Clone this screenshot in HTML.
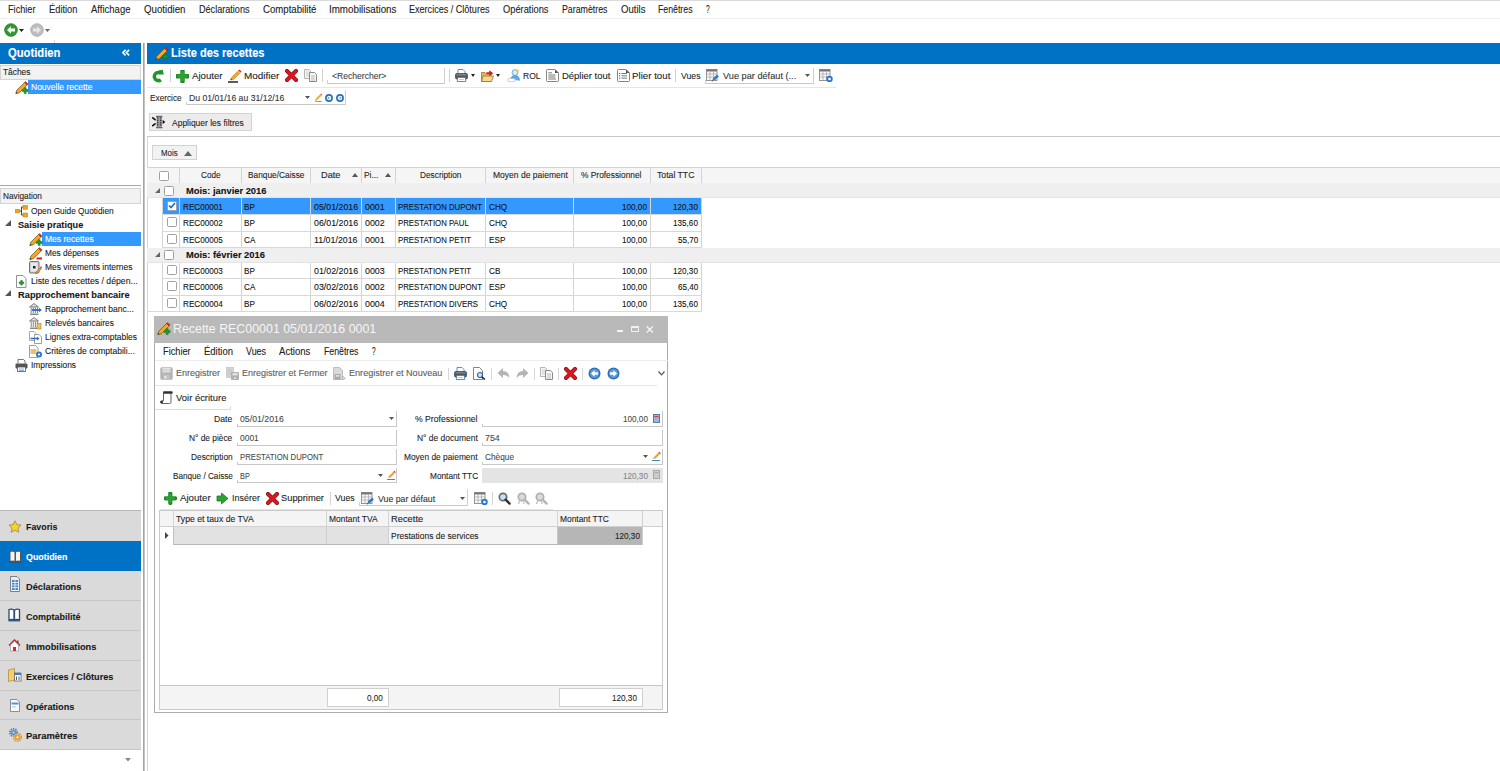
<!DOCTYPE html>
<html><head><meta charset="utf-8"><style>
html,body{margin:0;padding:0;width:1500px;height:771px;overflow:hidden;background:#fff;font-family:"Liberation Sans", sans-serif;}
.a{position:absolute;}
.t{position:absolute;white-space:nowrap;font-family:"Liberation Sans", sans-serif;-webkit-text-stroke:0.1px currentColor;}
</style></head><body>
<div class="a" style="left:0px;top:0px;width:1500px;height:1px;background:#dadada;"></div><div class="a" style="left:0px;top:18px;width:1500px;height:1px;background:#f0f0f0;"></div><div class="t" style="top:-0.64px;height:20px;line-height:20px;font-size:10.5px;color:#222;left:8.00px;transform:scaleX(0.872);transform-origin:0 0;">Fichier</div><div class="t" style="top:-0.64px;height:20px;line-height:20px;font-size:10.5px;color:#222;left:49.00px;transform:scaleX(0.886);transform-origin:0 0;">Édition</div><div class="t" style="top:-0.64px;height:20px;line-height:20px;font-size:10.5px;color:#222;left:91.00px;transform:scaleX(0.905);transform-origin:0 0;">Affichage</div><div class="t" style="top:-0.64px;height:20px;line-height:20px;font-size:10.5px;color:#222;left:144.00px;transform:scaleX(0.922);transform-origin:0 0;">Quotidien</div><div class="t" style="top:-0.64px;height:20px;line-height:20px;font-size:10.5px;color:#222;left:199.00px;transform:scaleX(0.865);transform-origin:0 0;">Déclarations</div><div class="t" style="top:-0.64px;height:20px;line-height:20px;font-size:10.5px;color:#222;left:263.00px;transform:scaleX(0.916);transform-origin:0 0;">Comptabilité</div><div class="t" style="top:-0.64px;height:20px;line-height:20px;font-size:10.5px;color:#222;left:329.00px;transform:scaleX(0.932);transform-origin:0 0;">Immobilisations</div><div class="t" style="top:-0.64px;height:20px;line-height:20px;font-size:10.5px;color:#222;left:409.00px;transform:scaleX(0.862);transform-origin:0 0;">Exercices / Clôtures</div><div class="t" style="top:-0.64px;height:20px;line-height:20px;font-size:10.5px;color:#222;left:503.00px;transform:scaleX(0.886);transform-origin:0 0;">Opérations</div><div class="t" style="top:-0.64px;height:20px;line-height:20px;font-size:10.5px;color:#222;left:562.00px;transform:scaleX(0.838);transform-origin:0 0;">Paramètres</div><div class="t" style="top:-0.64px;height:20px;line-height:20px;font-size:10.5px;color:#222;left:621.00px;transform:scaleX(0.911);transform-origin:0 0;">Outils</div><div class="t" style="top:-0.64px;height:20px;line-height:20px;font-size:10.5px;color:#222;left:658.00px;transform:scaleX(0.833);transform-origin:0 0;">Fenêtres</div><div class="t" style="top:-0.64px;height:20px;line-height:20px;font-size:10.5px;color:#222;left:706.00px;transform:scaleX(0.622);transform-origin:0 0;">?</div><svg class="a" style="left:4px;top:23px" width="14" height="14" viewBox="0 0 14 14"><circle cx="7" cy="7" r="6.3" fill="#2f9a2f" stroke="#1d7a1d" stroke-width="0.8"/><path d="M3 7 L7 3.2 V5.6 H11 V8.4 H7 V10.8 Z" fill="#fff"/></svg><svg class="a" style="left:19px;top:29px" width="5" height="3" viewBox="0 0 5 3"><path d="M0 0 H5 L2.5 3Z" fill="#222"/></svg><svg class="a" style="left:30px;top:23px" width="14" height="14" viewBox="0 0 14 14"><circle cx="7" cy="7" r="6.3" fill="#bdbdbd" stroke="#aaa" stroke-width="0.8"/><path d="M11 7 L7 3.2 V5.6 H3 V8.4 H7 V10.8 Z" fill="#e6e6e6"/></svg><svg class="a" style="left:45px;top:29px" width="5" height="3" viewBox="0 0 5 3"><path d="M0 0 H5 L2.5 3Z" fill="#666"/></svg><div class="a" style="left:54px;top:40px;width:1px;height:3px;background:#dcdcdc;"></div><div class="a" style="left:0px;top:43px;width:141px;height:21px;background:#0072c6;"></div><div class="t" style="top:42.67px;height:20px;line-height:20px;font-size:12.5px;color:#fff;font-weight:bold;left:8.00px;transform:scaleX(0.900);transform-origin:0 0;">Quotidien</div><svg class="a" style="left:122px;top:49px" width="8" height="8" viewBox="0 0 8 8"><path d="M3.6 0.8 L0.9 3.6 L3.6 6.4 M7.1 0.8 L4.4 3.6 L7.1 6.4" stroke="#f4f8fc" stroke-width="1.7" fill="none"/></svg><div class="a" style="left:0px;top:65px;width:141px;height:15px;background:#f2f2f2;box-sizing:border-box;border:1px solid #d4d4d4;"></div><div class="t" style="top:61.67px;height:20px;line-height:20px;font-size:9.6px;color:#222;left:3.00px;transform:scaleX(0.873);transform-origin:0 0;">Tâches</div><div class="a" style="left:28px;top:80px;width:113px;height:14px;background:#3399ff;"></div><div class="t" style="top:76.67px;height:20px;line-height:20px;font-size:9.6px;color:#fff;left:31.00px;transform:scaleX(0.886);transform-origin:0 0;">Nouvelle recette</div><div class="a" style="left:0px;top:185px;width:141px;height:1px;background:#a6a6a6;"></div><div class="a" style="left:0px;top:188px;width:141px;height:16px;background:#f2f2f2;box-sizing:border-box;border:1px solid #d4d4d4;"></div><div class="t" style="top:185.67px;height:20px;line-height:20px;font-size:9.6px;color:#222;left:3.00px;transform:scaleX(0.859);transform-origin:0 0;">Navigation</div><div class="a" style="left:42px;top:232px;width:99px;height:14px;background:#3399ff;"></div><div class="t" style="top:200.67px;height:20px;line-height:20px;font-size:9.6px;color:#1a1a1a;left:30.60px;transform:scaleX(0.866);transform-origin:0 0;">Open Guide Quotidien</div><svg class="a" style="left:15px;top:205px" width="13" height="13" viewBox="0 0 13 13"><path d="M4 6 H6.5 V2 H8 M6.5 6 V10 H8" stroke="#444" stroke-width="1" fill="none"/><rect x="0.3" y="4.3" width="4" height="3.6" fill="#f5a31a" stroke="#c07a10" stroke-width="0.5"/><rect x="8" y="0.3" width="4.6" height="4" fill="#f5a31a" stroke="#c07a10" stroke-width="0.5"/><rect x="8" y="8" width="4.6" height="4" fill="#f5a31a" stroke="#c07a10" stroke-width="0.5"/></svg><div class="t" style="top:214.67px;height:20px;line-height:20px;font-size:9.6px;color:#1a1a1a;font-weight:bold;left:17.60px;transform:scaleX(0.956);transform-origin:0 0;">Saisie pratique</div><svg class="a" style="left:5px;top:220px" width="6" height="6" viewBox="0 0 6 6"><path d="M6 0 V6 H0Z" fill="#555"/></svg><div class="t" style="top:228.67px;height:20px;line-height:20px;font-size:9.6px;color:#fff;left:44.60px;transform:scaleX(0.887);transform-origin:0 0;">Mes recettes</div><svg class="a" style="left:29px;top:233px" width="14" height="14" viewBox="0 0 14 14"><path d="M0.8 12.6 L1.8 9.2 L9.6 1.4 L12.2 4 L4.4 11.8Z" fill="#f5a623" stroke="#6a4a20" stroke-width="0.7"/><path d="M9.6 1.4 L10.6 0.4 L13.2 3 L12.2 4Z" fill="#e8252f" stroke="#a01010" stroke-width="0.4"/><path d="M0.8 12.6 L1.3 10.9 L2.6 12.1Z" fill="#333"/><path d="M7.3 8.6 H9.2 V6.7 H11.2 V8.6 H13.1 V10.6 H11.2 V12.6 H9.2 V10.6 H7.3Z" fill="#1f9a2a" stroke="#126a1a" stroke-width="0.5"/></svg><div class="t" style="top:242.67px;height:20px;line-height:20px;font-size:9.6px;color:#1a1a1a;left:44.60px;transform:scaleX(0.863);transform-origin:0 0;">Mes dépenses</div><svg class="a" style="left:29px;top:247px" width="14" height="14" viewBox="0 0 14 14"><path d="M0.8 12.6 L1.8 9.2 L9.6 1.4 L12.2 4 L4.4 11.8Z" fill="#f5a623" stroke="#6a4a20" stroke-width="0.7"/><path d="M9.6 1.4 L10.6 0.4 L13.2 3 L12.2 4Z" fill="#e8252f" stroke="#a01010" stroke-width="0.4"/><path d="M0.8 12.6 L1.3 10.9 L2.6 12.1Z" fill="#333"/><rect x="7.5" y="10.5" width="5.5" height="2" fill="#e0182a"/></svg><div class="t" style="top:256.67px;height:20px;line-height:20px;font-size:9.6px;color:#1a1a1a;left:44.60px;transform:scaleX(0.881);transform-origin:0 0;">Mes virements internes</div><svg class="a" style="left:29px;top:261px" width="14" height="14" viewBox="0 0 14 14"><rect x="0.5" y="0.5" width="9.5" height="11.5" rx="1" fill="#d0d0d0" stroke="#555" stroke-width="0.8"/><rect x="2" y="2" width="6.5" height="8.5" fill="#e8e8e8"/><rect x="4" y="5" width="2.5" height="2.5" fill="#222"/><path d="M6.5 12.5 L7 11 L11 7 L12.2 8.2 L8.2 12.2Z" fill="#f5a623" stroke="#6a4a20" stroke-width="0.5"/><circle cx="12" cy="6.5" r="0.9" fill="#e03030"/></svg><div class="t" style="top:270.67px;height:20px;line-height:20px;font-size:9.6px;color:#1a1a1a;left:30.60px;transform:scaleX(0.906);transform-origin:0 0;">Liste des recettes / dépen...</div><svg class="a" style="left:16px;top:275px" width="11" height="13" viewBox="0 0 11 13"><path d="M0.5 0.5 H7 L10 3.5 V12.5 H0.5Z" fill="#fff" stroke="#777" stroke-width="0.8"/><path d="M3.2 7 H4.7 V5.5 H6.3 V7 H7.8 V8.6 H6.3 V10.1 H4.7 V8.6 H3.2Z" fill="#1f9a2a" stroke="#126a1a" stroke-width="0.5"/></svg><div class="t" style="top:284.67px;height:20px;line-height:20px;font-size:9.6px;color:#1a1a1a;font-weight:bold;left:17.60px;transform:scaleX(0.969);transform-origin:0 0;">Rapprochement bancaire</div><svg class="a" style="left:5px;top:290px" width="6" height="6" viewBox="0 0 6 6"><path d="M6 0 V6 H0Z" fill="#555"/></svg><div class="t" style="top:298.67px;height:20px;line-height:20px;font-size:9.6px;color:#1a1a1a;left:44.60px;transform:scaleX(0.891);transform-origin:0 0;">Rapprochement banc...</div><svg class="a" style="left:29px;top:303px" width="13" height="13" viewBox="0 0 13 13"><path d="M0.5 4 L5 0.5 L9.5 4Z" fill="#ddd" stroke="#666" stroke-width="0.8"/><rect x="1" y="10.5" width="8.5" height="1.5" fill="#888"/><path d="M2.2 4.5 V10 M4.3 4.5 V10 M6.4 4.5 V10 M8.5 4.5 V10" stroke="#777" stroke-width="0.9"/><path d="M3 7 H11.5" stroke="#2a70c0" stroke-width="1.8"/><path d="M10 4.8 L12.8 7 L10 9.2Z" fill="#2a70c0"/></svg><div class="t" style="top:312.67px;height:20px;line-height:20px;font-size:9.6px;color:#1a1a1a;left:44.60px;transform:scaleX(0.872);transform-origin:0 0;">Relevés bancaires</div><svg class="a" style="left:29px;top:317px" width="13" height="13" viewBox="0 0 13 13"><path d="M0.5 4 L5 0.5 L9.5 4Z" fill="#ddd" stroke="#666" stroke-width="0.8"/><rect x="1" y="10.5" width="8.5" height="1.5" fill="#888"/><path d="M2.2 4.5 V10 M4.3 4.5 V10 M6.4 4.5 V10 M8.5 4.5 V10" stroke="#777" stroke-width="0.9"/><rect x="8" y="6.5" width="4" height="5.5" fill="#f2c060" stroke="#b07a20" stroke-width="0.6"/></svg><div class="t" style="top:326.67px;height:20px;line-height:20px;font-size:9.6px;color:#1a1a1a;left:44.60px;transform:scaleX(0.880);transform-origin:0 0;">Lignes extra-comptables</div><svg class="a" style="left:29px;top:331px" width="13" height="13" viewBox="0 0 13 13"><path d="M0.5 0.5 H5 L7 2.5 V9.5 H0.5Z" fill="#fff" stroke="#888" stroke-width="0.7"/><path d="M5.5 3.5 H10 L12.5 6 V12.5 H5.5Z" fill="#fff" stroke="#777" stroke-width="0.7"/><path d="M1.5 7.5 H9" stroke="#2a70c0" stroke-width="1.6"/><path d="M8 5.5 L10.5 7.5 L8 9.5Z" fill="#2a70c0"/></svg><div class="t" style="top:340.67px;height:20px;line-height:20px;font-size:9.6px;color:#1a1a1a;left:44.60px;transform:scaleX(0.891);transform-origin:0 0;">Critères de comptabili...</div><svg class="a" style="left:29px;top:345px" width="14" height="13" viewBox="0 0 14 13"><path d="M0.5 0.5 H6.5 L9 3 V12.5 H0.5Z" fill="#fff" stroke="#777" stroke-width="0.7"/><rect x="1.5" y="4" width="6" height="5" fill="#f2c060"/><circle cx="10" cy="9.5" r="3" fill="#2a78d0"/><circle cx="10" cy="9.5" r="1.1" fill="#fff"/></svg><div class="t" style="top:354.67px;height:20px;line-height:20px;font-size:9.6px;color:#1a1a1a;left:30.60px;transform:scaleX(0.871);transform-origin:0 0;">Impressions</div><svg class="a" style="left:15px;top:359px" width="13" height="13" viewBox="0 0 13 13"><path d="M3 4.5 V0.5 H8.5 L10 2 V4.5" fill="#fff" stroke="#555" stroke-width="0.8"/><rect x="0.5" y="4.5" width="12" height="5" rx="1" fill="#555"/><rect x="2.5" y="8" width="8" height="4.5" fill="#fff" stroke="#555" stroke-width="0.8"/><path d="M4 10H9M4 11.5H9" stroke="#6aa0d8" stroke-width="0.8"/></svg><div class="a" style="left:0px;top:510px;width:141px;height:1px;background:#b8b8b8;"></div><div class="a" style="left:0px;top:511px;width:141px;height:30px;background:#dadada;"></div><div class="t" style="top:516.60px;height:20px;line-height:20px;font-size:9.8px;color:#1a1a1a;font-weight:bold;left:26.00px;transform:scaleX(0.903);transform-origin:0 0;">Favoris</div><div class="a" style="left:0px;top:541px;width:141px;height:30px;background:#0072c6;"></div><div class="t" style="top:546.60px;height:20px;line-height:20px;font-size:9.8px;color:#fff;font-weight:bold;left:26.00px;transform:scaleX(0.907);transform-origin:0 0;">Quotidien</div><div class="a" style="left:0px;top:571px;width:141px;height:30px;background:#dadada;"></div><div class="a" style="left:0px;top:600px;width:141px;height:1px;background:#c6c6c6;"></div><div class="t" style="top:576.60px;height:20px;line-height:20px;font-size:9.8px;color:#1a1a1a;font-weight:bold;left:26.00px;transform:scaleX(0.942);transform-origin:0 0;">Déclarations</div><div class="a" style="left:0px;top:601px;width:141px;height:30px;background:#dadada;"></div><div class="a" style="left:0px;top:630px;width:141px;height:1px;background:#c6c6c6;"></div><div class="t" style="top:606.60px;height:20px;line-height:20px;font-size:9.8px;color:#1a1a1a;font-weight:bold;left:26.00px;transform:scaleX(0.918);transform-origin:0 0;">Comptabilité</div><div class="a" style="left:0px;top:631px;width:141px;height:30px;background:#dadada;"></div><div class="a" style="left:0px;top:660px;width:141px;height:1px;background:#c6c6c6;"></div><div class="t" style="top:636.60px;height:20px;line-height:20px;font-size:9.8px;color:#1a1a1a;font-weight:bold;left:26.00px;transform:scaleX(0.944);transform-origin:0 0;">Immobilisations</div><div class="a" style="left:0px;top:661px;width:141px;height:30px;background:#dadada;"></div><div class="a" style="left:0px;top:690px;width:141px;height:1px;background:#c6c6c6;"></div><div class="t" style="top:666.60px;height:20px;line-height:20px;font-size:9.8px;color:#1a1a1a;font-weight:bold;left:26.00px;transform:scaleX(0.933);transform-origin:0 0;">Exercices / Clôtures</div><div class="a" style="left:0px;top:691px;width:141px;height:29px;background:#dadada;"></div><div class="a" style="left:0px;top:719px;width:141px;height:1px;background:#c6c6c6;"></div><div class="t" style="top:696.60px;height:20px;line-height:20px;font-size:9.8px;color:#1a1a1a;font-weight:bold;left:26.00px;transform:scaleX(0.936);transform-origin:0 0;">Opérations</div><div class="a" style="left:0px;top:720px;width:141px;height:30px;background:#dadada;"></div><div class="t" style="top:725.60px;height:20px;line-height:20px;font-size:9.8px;color:#1a1a1a;font-weight:bold;left:26.00px;transform:scaleX(0.963);transform-origin:0 0;">Paramètres</div><div class="a" style="left:0px;top:749px;width:141px;height:1px;background:#c6c6c6;"></div><svg class="a" style="left:125px;top:758px" width="6" height="4" viewBox="0 0 6 4"><path d="M0 0 H6 L3 3.5Z" fill="#888"/></svg><svg class="a" style="left:8px;top:520px" width="14" height="14" viewBox="0 0 14 14"><path d="M7 0.8 L8.9 4.6 L13 5.1 L10 8 L10.8 12.3 L7 10.2 L3.2 12.3 L4 8 L1 5.1 L5.1 4.6Z" fill="#f8d12f" stroke="#9a8a40" stroke-width="0.8" stroke-linejoin="round"/></svg><svg class="a" style="left:9px;top:550px" width="13" height="13" viewBox="0 0 13 13"><path d="M1 1.5 Q3.5 0.5 6 2 V11.5 Q3.5 10.5 1 11.5Z M11.5 1.5 Q9 0.5 6.5 2 V11.5 Q9 10.5 11.5 11.5Z" fill="#f4f4f4" stroke="#555" stroke-width="1"/><path d="M0.5 12 H12" stroke="#444" stroke-width="1"/></svg><svg class="a" style="left:10px;top:576px" width="10" height="16" viewBox="0 0 10 16"><path d="M0.5 0.5 H7 L9.5 3 V15.5 H0.5Z" fill="#e8eef6" stroke="#667" stroke-width="0.8"/><rect x="2" y="4" width="6" height="10" fill="#4a88c8"/><path d="M2 6.5H8M2 9H8M2 11.5H8M5 4V14" stroke="#e8eef6" stroke-width="0.9"/></svg><svg class="a" style="left:8px;top:608px" width="13" height="14" viewBox="0 0 13 14"><path d="M1 1.5 Q3.5 0.5 6 2 V12 Q3.5 11 1 12Z M11.5 1.5 Q9 0.5 6.5 2 V12 Q9 11 11.5 12Z" fill="#fff" stroke="#2a4a78" stroke-width="1.3"/><path d="M0.5 12.8 H12" stroke="#2a4a78" stroke-width="1.2"/></svg><svg class="a" style="left:8px;top:639px" width="13" height="13" viewBox="0 0 13 13"><path d="M1 6.5 L6.5 1 L12 6.5" stroke="#b83030" stroke-width="1.6" fill="none"/><path d="M2.5 6 V12 H10.5 V6 L6.5 2.3Z" fill="#fff" stroke="#999" stroke-width="0.7"/><rect x="5" y="8" width="3" height="4" fill="#c83030"/><rect x="9" y="1.5" width="1.5" height="3" fill="#b83030"/></svg><svg class="a" style="left:8px;top:668px" width="14" height="14" viewBox="0 0 14 14"><path d="M0.5 2 L6.5 0.5 V12 L0.5 13.5Z" fill="#f7cf6a" stroke="#a07a20" stroke-width="0.6"/><rect x="6.5" y="5" width="6.5" height="8" fill="#fff" stroke="#555" stroke-width="0.7"/><rect x="6.5" y="5" width="6.5" height="2" fill="#3a7ad0"/><path d="M8.5 8.5V12M11 8.5V12" stroke="#333" stroke-width="0.8"/></svg><svg class="a" style="left:10px;top:699px" width="10" height="13" viewBox="0 0 10 13"><path d="M0.5 0.5 H7 L9.5 3 V12.5 H0.5Z" fill="#fafafa" stroke="#777" stroke-width="0.8"/><rect x="1.5" y="3.5" width="7" height="2" fill="#4a98e0"/><path d="M2 8H6" stroke="#bbb"/></svg><svg class="a" style="left:9px;top:728px" width="13" height="14" viewBox="0 0 13 14"><circle cx="4.5" cy="4.5" r="3.6" fill="none" stroke="#4a80c0" stroke-width="1.8" stroke-dasharray="1.4 0.9"/><circle cx="4.5" cy="4.5" r="2.6" fill="#5a90d0"/><circle cx="4.5" cy="4.5" r="1" fill="#dde"/><circle cx="8.5" cy="9.3" r="3.8" fill="none" stroke="#e09a2a" stroke-width="1.8" stroke-dasharray="1.5 0.9"/><circle cx="8.5" cy="9.3" r="2.8" fill="#eaa030"/><circle cx="8.5" cy="9.3" r="1.1" fill="#fff"/></svg><div class="a" style="left:143px;top:43px;width:1px;height:728px;background:#a4a4a4;"></div><div class="a" style="left:144px;top:43px;width:1px;height:728px;background:#c4c4c4;"></div><div class="a" style="left:147px;top:136px;width:1px;height:635px;background:#d4d4d4;"></div><div class="a" style="left:147px;top:43px;width:1353px;height:21px;background:#0072c6;"></div><svg class="a" style="left:155px;top:47px" width="14" height="14" viewBox="0 0 14 14"><path d="M0.8 12.6 L1.8 9.2 L9.6 1.4 L12.2 4 L4.4 11.8Z" fill="#f5a623" stroke="#6a4a20" stroke-width="0.7"/><path d="M9.6 1.4 L10.6 0.4 L13.2 3 L12.2 4Z" fill="#e8252f" stroke="#a01010" stroke-width="0.4"/><path d="M0.8 12.6 L1.3 10.9 L2.6 12.1Z" fill="#333"/><path d="M7.3 8.6 H9.2 V6.7 H11.2 V8.6 H13.1 V10.6 H11.2 V12.6 H9.2 V10.6 H7.3Z" fill="#1f9a2a" stroke="#126a1a" stroke-width="0.5"/></svg><div class="t" style="top:42.67px;height:20px;line-height:20px;font-size:12.5px;color:#fff;font-weight:bold;left:171.00px;transform:scaleX(0.885);transform-origin:0 0;">Liste des recettes</div><div class="a" style="left:147px;top:87px;width:689px;height:1px;background:#e6e6e6;"></div><svg class="a" style="left:152px;top:69px" width="13" height="14" viewBox="0 0 13 14"><path d="M8 3.4 H6.5 A4.1 4.1 0 1 0 8.9 10.8" stroke="#20962a" stroke-width="3.5" fill="none"/><path d="M6.5 1.6 L10.6 0.8 L11.8 5.6 L7 5.5Z" fill="#20962a"/></svg><div class="a" style="left:170px;top:69px;width:1px;height:13px;background:#d0d0d0;"></div><svg class="a" style="left:176px;top:70px" width="13" height="13" viewBox="0 0 13 13"><path d="M6.5 1 V11.5 M1 6.3 H11.8" stroke="#1f8a26" stroke-width="4.4" stroke-linecap="round"/><path d="M6.5 1.5 V11 M1.5 6.3 H11.3" stroke="#2aa332" stroke-width="3"/></svg><div class="t" style="top:65.60px;height:20px;line-height:20px;font-size:9.8px;color:#1e1e1e;left:191.50px;transform:scaleX(0.985);transform-origin:0 0;">Ajouter</div><svg class="a" style="left:228px;top:69px" width="14" height="14" viewBox="0 0 14 14"><path d="M2.5 11 L3.5 8.5 L10.5 1.5 L12.5 3.5 L5.5 10.5Z" fill="#f5a623" stroke="#b06a10" stroke-width="0.5"/><path d="M10.5 1.5 L11.5 0.5 L13.5 2.5 L12.5 3.5Z" fill="#e8252f"/><path d="M9.8 2.2 L12.8 4.2" stroke="#ddd" stroke-width="0.8"/><path d="M2.5 11 L3 9.5 L4 10.5Z" fill="#333"/><rect x="0" y="12.2" width="10" height="1.6" fill="#333"/></svg><div class="t" style="top:65.60px;height:20px;line-height:20px;font-size:9.8px;color:#1e1e1e;left:244.00px;transform:scaleX(1.016);transform-origin:0 0;">Modifier</div><svg class="a" style="left:285px;top:69px" width="13" height="13" viewBox="0 0 13 13"><path d="M2 2 L11 11 M11 2 L2 11" stroke="#6a1010" stroke-width="4" stroke-linecap="round"/><path d="M2 2 L11 11 M11 2 L2 11" stroke="#e0161e" stroke-width="3" stroke-linecap="round"/></svg><svg class="a" style="left:304px;top:69px" width="14" height="14" viewBox="0 0 14 14"><path d="M0.5 0.5 H5 L6.5 2 V9.5 H0.5Z" fill="#f6f6f6" stroke="#b4b4b4"/><path d="M2 3H5M2 5H5M2 7H5" stroke="#ccc"/><path d="M5.5 3.5 H10.5 L12.5 5.5 V12.5 H5.5Z" fill="#f6f6f6" stroke="#8a8a8a"/><path d="M7 7H11M7 9H11M7 11H11" stroke="#bbb"/></svg><div class="a" style="left:322px;top:69px;width:1px;height:13px;background:#d0d0d0;"></div><div class="a" style="left:327px;top:83px;width:118px;height:1px;background:#c8c8c8;"></div><div class="a" style="left:444px;top:68px;width:1px;height:16px;background:#d0d0d0;"></div><div class="a" style="left:327px;top:80px;width:1px;height:4px;background:#d0d0d0;"></div><div class="t" style="top:65.81px;height:20px;line-height:20px;font-size:9.2px;color:#444;left:332.00px;transform:scaleX(0.934);transform-origin:0 0;">&lt;Rechercher&gt;</div><div class="a" style="left:449px;top:69px;width:1px;height:13px;background:#d0d0d0;"></div><svg class="a" style="left:455px;top:69px" width="13" height="13" viewBox="0 0 13 13"><path d="M3 5 V0.5 H8 L10 2.5 V5" fill="#fff" stroke="#3a86d8" stroke-width="0.9"/><rect x="0.5" y="4.5" width="12" height="5.5" rx="1.2" fill="#555" stroke="#333" stroke-width="0.6"/><rect x="1.5" y="5.2" width="10" height="1.3" fill="#888"/><path d="M2.8 8.5 H10.2 L10.8 12.5 H2.2Z" fill="#fff" stroke="#3a86d8" stroke-width="0.9"/><path d="M4 10.5 H9" stroke="#bbb" stroke-width="0.8"/></svg><svg class="a" style="left:471px;top:74px" width="4" height="3" viewBox="0 0 4 3"><path d="M0 0H4L2 3Z" fill="#222"/></svg><svg class="a" style="left:481px;top:70px" width="13" height="12" viewBox="0 0 13 12"><path d="M0.5 2.5 H4 L5 3.5 H10 V11.5 H0.5Z" fill="#e8b850" stroke="#8a6a30" stroke-width="0.7"/><path d="M0.5 11.5 L2 6 H12.5 L10.5 11.5Z" fill="#f8d890" stroke="#8a6a30" stroke-width="0.7"/><path d="M5.5 2.2 H8.3 V0.2 L12.3 3.2 L8.3 6.2 V4.2 H5.5Z" fill="#e0161e"/></svg><svg class="a" style="left:496px;top:74px" width="4" height="3" viewBox="0 0 4 3"><path d="M0 0H4L2 3Z" fill="#222"/></svg><svg class="a" style="left:507px;top:69px" width="13" height="13" viewBox="0 0 13 13"><path d="M3.5 11 Q4 6.5 8 6.5 Q12 6.5 12.5 11.5" fill="#5ab0e8" stroke="#2a80c8" stroke-width="0.7"/><circle cx="8" cy="3.6" r="2.9" fill="#d8eefa" stroke="#4a9ad8" stroke-width="0.8"/><circle cx="10.3" cy="1.6" r="1.2" fill="#f0c020"/><ellipse cx="4.3" cy="11" rx="4" ry="1.8" fill="#fff" stroke="#aaa" stroke-width="0.6"/></svg><div class="t" style="top:65.60px;height:20px;line-height:20px;font-size:9.8px;color:#1e1e1e;left:523.00px;transform:scaleX(0.868);transform-origin:0 0;">ROL</div><svg class="a" style="left:546px;top:69px" width="13" height="13" viewBox="0 0 13 13"><path d="M1.5 0.5 H9 L12.5 4 V11.5 Q12.5 12.5 11.5 12.5 H1.5 Q0.5 12.5 0.5 11.5 V1.5 Q0.5 0.5 1.5 0.5Z" fill="#fff" stroke="#777" stroke-width="0.9"/><path d="M9 0.5 L12.5 4 H9Z" fill="#555"/><path d="M2.3 3.8 H6 M2.3 6 H9.5 M2.3 8 H9.5 M2.3 10 H10" stroke="#666" stroke-width="0.9"/></svg><div class="t" style="top:65.60px;height:20px;line-height:20px;font-size:9.8px;color:#1e1e1e;left:562.00px;transform:scaleX(0.966);transform-origin:0 0;">Déplier tout</div><svg class="a" style="left:617px;top:69px" width="13" height="13" viewBox="0 0 13 13"><path d="M1.5 0.5 H9 L12.5 4 V11.5 Q12.5 12.5 11.5 12.5 H1.5 Q0.5 12.5 0.5 11.5 V1.5 Q0.5 0.5 1.5 0.5Z" fill="#fff" stroke="#777" stroke-width="0.9"/><path d="M9 0.5 L12.5 4 H9Z" fill="#555"/><path d="M2 4.5 H3.2 M2 6.8 H3.2 M2 9.1 H3.2" stroke="#555" stroke-width="1"/><path d="M4.5 4.5 H10 M4.5 6.8 H10 M4.5 9.1 H10" stroke="#666" stroke-width="0.9"/></svg><div class="t" style="top:65.60px;height:20px;line-height:20px;font-size:9.8px;color:#1e1e1e;left:632.00px;transform:scaleX(0.993);transform-origin:0 0;">Plier tout</div><div class="a" style="left:675px;top:69px;width:1px;height:13px;background:#d0d0d0;"></div><div class="t" style="top:65.60px;height:20px;line-height:20px;font-size:9.8px;color:#1e1e1e;left:681.00px;transform:scaleX(0.887);transform-origin:0 0;">Vues</div><div class="a" style="left:705px;top:83px;width:109px;height:1px;background:#c8c8c8;"></div><div class="a" style="left:813px;top:68px;width:1px;height:16px;background:#d0d0d0;"></div><div class="a" style="left:705px;top:80px;width:1px;height:4px;background:#d0d0d0;"></div><svg class="a" style="left:706px;top:69px" width="14" height="13" viewBox="0 0 14 13"><rect x="0.5" y="0.5" width="10.5" height="11" fill="#fafafa" stroke="#888" stroke-width="0.9"/><rect x="0.5" y="0.5" width="10.5" height="2" fill="#777"/><path d="M0.5 5H11M0.5 8H11M4 2.5V11.5M7.5 2.5V11.5" stroke="#aaa" stroke-width="0.8"/><path d="M6.5 11 L7.2 9.2 L11 5.6 L12.8 7.4 L9 11Z" fill="#2a7ad0"/><path d="M6.2 12.5 L7 11" stroke="#444" stroke-width="0.8"/></svg><div class="t" style="top:65.81px;height:20px;line-height:20px;font-size:9.2px;color:#333;left:723.00px;">Vue par défaut (...</div><svg class="a" style="left:805px;top:74px" width="5" height="3" viewBox="0 0 5 3"><path d="M0 0H5L2.5 3Z" fill="#555"/></svg><svg class="a" style="left:819px;top:69px" width="14" height="13" viewBox="0 0 14 13"><rect x="0.5" y="0.5" width="10.5" height="11" fill="#fafafa" stroke="#888" stroke-width="0.9"/><rect x="0.5" y="0.5" width="10.5" height="2" fill="#777"/><path d="M0.5 5H11M0.5 8H11M4 2.5V11.5M7.5 2.5V11.5" stroke="#aaa" stroke-width="0.8"/><circle cx="10.5" cy="10" r="2.3" fill="#fff" stroke="#2a78d0" stroke-width="1.9"/></svg><div class="t" style="top:87.67px;height:20px;line-height:20px;font-size:9.6px;color:#1e1e1e;left:150.30px;transform:scaleX(0.861);transform-origin:0 0;">Exercice</div><div class="a" style="left:186px;top:104px;width:160px;height:1px;background:#c8c8c8;"></div><div class="a" style="left:345px;top:90px;width:1px;height:15px;background:#d0d0d0;"></div><div class="a" style="left:186px;top:102px;width:1px;height:3px;background:#d0d0d0;"></div><div class="t" style="top:87.67px;height:20px;line-height:20px;font-size:9.6px;color:#333;left:188.70px;transform:scaleX(0.903);transform-origin:0 0;">Du 01/01/16 au 31/12/16</div><svg class="a" style="left:305px;top:96px" width="5" height="3" viewBox="0 0 5 3"><path d="M0 0H5L2.5 3Z" fill="#555"/></svg><svg class="a" style="left:314px;top:93px" width="9" height="9" viewBox="0 0 9 9"><path d="M0.8 7.8 L1.5 6 L6.3 1.2 L7.6 2.5 L2.8 7.3Z" fill="#f5a623"/><path d="M6.3 1.2 L7 0.5 L8.3 1.8 L7.6 2.5Z" fill="#e04040"/><rect x="1" y="8" width="7" height="1" fill="#6aaae0"/></svg><svg class="a" style="left:325px;top:94px" width="8" height="8" viewBox="0 0 8 8"><circle cx="4" cy="4" r="3.1" fill="#fff" stroke="#2a70b8" stroke-width="1.7"/><path d="M2.3 4 L4.3 2.4 V5.6Z" fill="#5a9ad8"/></svg><svg class="a" style="left:336px;top:94px" width="8" height="8" viewBox="0 0 8 8"><circle cx="4" cy="4" r="3.1" fill="#fff" stroke="#2a70b8" stroke-width="1.7"/><path d="M5.7 4 L3.7 2.4 V5.6Z" fill="#5a9ad8"/></svg><div class="a" style="left:149px;top:113px;width:103px;height:18px;background:#ececec;box-sizing:border-box;border:1px solid #d4d4d4;"></div><svg class="a" style="left:151px;top:115px" width="15" height="14" viewBox="0 0 15 14"><path d="M1.8 2.8 L4 4.6 M1.8 10.6 L4 8.8" stroke="#111" stroke-width="1.7" stroke-linecap="round"/><rect x="5.5" y="1.5" width="5.5" height="11" fill="#9a9a9a"/><rect x="5" y="0.8" width="6.5" height="1.3" fill="#666"/><rect x="5" y="12" width="6.5" height="1.3" fill="#666"/><path d="M6.2 3H7.2M9.3 3H10.3M6.2 5.3H7.2M9.3 5.3H10.3M6.2 7.6H7.2M9.3 7.6H10.3M6.2 9.9H7.2M9.3 9.9H10.3" stroke="#111" stroke-width="1.2"/><path d="M11.6 4.8 L14.2 7 L11.6 9.3Z" fill="#111"/></svg><div class="t" style="top:112.67px;height:20px;line-height:20px;font-size:9.6px;color:#1e1e1e;left:171.70px;transform:scaleX(0.885);transform-origin:0 0;">Appliquer les filtres</div><svg class="a" style="left:15px;top:81px" width="14" height="14" viewBox="0 0 14 14"><path d="M0.8 12.6 L1.8 9.2 L9.6 1.4 L12.2 4 L4.4 11.8Z" fill="#f5a623" stroke="#6a4a20" stroke-width="0.7"/><path d="M9.6 1.4 L10.6 0.4 L13.2 3 L12.2 4Z" fill="#e8252f" stroke="#a01010" stroke-width="0.4"/><path d="M0.8 12.6 L1.3 10.9 L2.6 12.1Z" fill="#333"/><path d="M7.3 8.6 H9.2 V6.7 H11.2 V8.6 H13.1 V10.6 H11.2 V12.6 H9.2 V10.6 H7.3Z" fill="#1f9a2a" stroke="#126a1a" stroke-width="0.5"/></svg><div class="a" style="left:147px;top:136px;width:1353px;height:1px;background:#c8c8c8;"></div><div class="a" style="left:152px;top:145px;width:45px;height:15px;background:#f2f2f2;box-sizing:border-box;border:1px solid #d2d2d2;"></div><div class="t" style="top:142.67px;height:20px;line-height:20px;font-size:9.6px;color:#1e1e1e;left:160.80px;transform:scaleX(0.820);transform-origin:0 0;">Mois</div><svg class="a" style="left:184px;top:151px" width="8" height="5" viewBox="0 0 8 5"><path d="M0 5 L4 0 L8 5Z" fill="#666"/></svg><div class="a" style="left:147px;top:167px;width:1353px;height:16px;background:#f5f5f5;"></div><div class="a" style="left:147px;top:167px;width:1353px;height:1px;background:#d4d4d4;"></div><div class="a" style="left:147px;top:183px;width:1353px;height:1px;background:#cfcfcf;"></div><div class="a" style="left:179px;top:167px;width:1px;height:16px;background:#d4d4d4;"></div><div class="a" style="left:241px;top:167px;width:1px;height:16px;background:#d4d4d4;"></div><div class="a" style="left:310px;top:167px;width:1px;height:16px;background:#d4d4d4;"></div><div class="a" style="left:361px;top:167px;width:1px;height:16px;background:#d4d4d4;"></div><div class="a" style="left:395px;top:167px;width:1px;height:16px;background:#d4d4d4;"></div><div class="a" style="left:485px;top:167px;width:1px;height:16px;background:#d4d4d4;"></div><div class="a" style="left:573px;top:167px;width:1px;height:16px;background:#d4d4d4;"></div><div class="a" style="left:650px;top:167px;width:1px;height:16px;background:#d4d4d4;"></div><div class="a" style="left:701px;top:167px;width:1px;height:16px;background:#d4d4d4;"></div><div class="a" style="left:159px;top:171px;width:10px;height:10px;background:#fff;box-sizing:border-box;border:1px solid #a0a0a0;border-radius:1.5px;"></div><div class="t" style="top:164.67px;height:20px;line-height:20px;font-size:9.6px;color:#1e1e1e;left:200.50px;transform:scaleX(0.854);transform-origin:0 0;">Code</div><div class="t" style="top:164.67px;height:20px;line-height:20px;font-size:9.6px;color:#1e1e1e;left:248.00px;transform:scaleX(0.868);transform-origin:0 0;">Banque/Caisse</div><div class="t" style="top:164.67px;height:20px;line-height:20px;font-size:9.6px;color:#1e1e1e;left:321.00px;transform:scaleX(0.959);transform-origin:0 0;">Date</div><svg class="a" style="left:352px;top:173px" width="6" height="4" viewBox="0 0 6 4"><path d="M0 4 L3 0 L6 4Z" fill="#555"/></svg><div class="t" style="top:164.67px;height:20px;line-height:20px;font-size:9.6px;color:#1e1e1e;left:364.00px;transform:scaleX(0.874);transform-origin:0 0;">Pi...</div><svg class="a" style="left:385px;top:173px" width="6" height="4" viewBox="0 0 6 4"><path d="M0 4 L3 0 L6 4Z" fill="#555"/></svg><div class="t" style="top:164.67px;height:20px;line-height:20px;font-size:9.6px;color:#1e1e1e;left:420.00px;transform:scaleX(0.864);transform-origin:0 0;">Description</div><div class="t" style="top:164.67px;height:20px;line-height:20px;font-size:9.6px;color:#1e1e1e;left:492.50px;transform:scaleX(0.889);transform-origin:0 0;">Moyen de paiement</div><div class="t" style="top:164.67px;height:20px;line-height:20px;font-size:9.6px;color:#1e1e1e;left:581.00px;transform:scaleX(0.872);transform-origin:0 0;">% Professionnel</div><div class="t" style="top:164.67px;height:20px;line-height:20px;font-size:9.6px;color:#1e1e1e;left:657.00px;transform:scaleX(0.904);transform-origin:0 0;">Total TTC</div><div class="a" style="left:147px;top:183px;width:1353px;height:15px;background:#efefef;"></div><div class="a" style="left:147px;top:197px;width:1353px;height:1px;background:#e4e4e4;"></div><svg class="a" style="left:155px;top:188px" width="5" height="5" viewBox="0 0 5 5"><path d="M5 0 V5 H0Z" fill="#666"/></svg><div class="a" style="left:164px;top:186px;width:10px;height:10px;background:#fff;box-sizing:border-box;border:1px solid #a0a0a0;border-radius:1.5px;"></div><div class="t" style="top:180.60px;height:20px;line-height:20px;font-size:9.8px;color:#111;font-weight:bold;left:186.00px;transform:scaleX(0.953);transform-origin:0 0;">Mois: janvier 2016</div><div class="a" style="left:163px;top:198px;width:539px;height:17px;background:#3399ff;"></div><div class="a" style="left:162px;top:198px;width:1px;height:17px;background:#d4d4d4;"></div><div class="a" style="left:179px;top:198px;width:1px;height:17px;background:#d4d4d4;"></div><div class="a" style="left:241px;top:198px;width:1px;height:17px;background:#d4d4d4;"></div><div class="a" style="left:310px;top:198px;width:1px;height:17px;background:#d4d4d4;"></div><div class="a" style="left:361px;top:198px;width:1px;height:17px;background:#d4d4d4;"></div><div class="a" style="left:395px;top:198px;width:1px;height:17px;background:#d4d4d4;"></div><div class="a" style="left:485px;top:198px;width:1px;height:17px;background:#d4d4d4;"></div><div class="a" style="left:573px;top:198px;width:1px;height:17px;background:#d4d4d4;"></div><div class="a" style="left:650px;top:198px;width:1px;height:17px;background:#d4d4d4;"></div><div class="a" style="left:701px;top:198px;width:1px;height:17px;background:#d4d4d4;"></div><div class="a" style="left:163px;top:214px;width:539px;height:1px;background:#d8d8d8;"></div><div class="a" style="left:167px;top:201px;width:10px;height:10px;background:#fff;box-sizing:border-box;border:1px solid #a0a0a0;border-radius:1.5px;"></div><svg class="a" style="left:168px;top:202px" width="8" height="8" viewBox="0 0 8 8"><path d="M1 3.5 L3 5.5 L7 1" stroke="#1a6ad0" stroke-width="1.6" fill="none"/></svg><div class="t" style="top:196.67px;height:20px;line-height:20px;font-size:9.6px;color:#111;left:182.70px;transform:scaleX(0.850);transform-origin:0 0;">REC00001</div><div class="t" style="top:196.67px;height:20px;line-height:20px;font-size:9.6px;color:#111;left:243.50px;transform:scaleX(0.850);transform-origin:0 0;">BP</div><div class="t" style="top:196.67px;height:20px;line-height:20px;font-size:9.6px;color:#111;left:313.50px;transform:scaleX(0.920);transform-origin:0 0;">05/01/2016</div><div class="t" style="top:196.67px;height:20px;line-height:20px;font-size:9.6px;color:#111;left:364.50px;transform:scaleX(0.925);transform-origin:0 0;">0001</div><div class="t" style="top:196.67px;height:20px;line-height:20px;font-size:9.6px;color:#111;left:398.00px;transform:scaleX(0.815);transform-origin:0 0;">PRESTATION DUPONT</div><div class="t" style="top:196.67px;height:20px;line-height:20px;font-size:9.6px;color:#111;left:488.50px;transform:scaleX(0.850);transform-origin:0 0;">CHQ</div><div class="t" style="top:196.67px;height:20px;line-height:20px;font-size:9.6px;color:#111;left:622.03px;transform:scaleX(0.850);transform-origin:0 0;">100,00</div><div class="t" style="top:196.67px;height:20px;line-height:20px;font-size:9.6px;color:#111;left:673.03px;transform:scaleX(0.850);transform-origin:0 0;">120,30</div><div class="a" style="left:162px;top:215px;width:1px;height:17px;background:#d4d4d4;"></div><div class="a" style="left:179px;top:215px;width:1px;height:17px;background:#d4d4d4;"></div><div class="a" style="left:241px;top:215px;width:1px;height:17px;background:#d4d4d4;"></div><div class="a" style="left:310px;top:215px;width:1px;height:17px;background:#d4d4d4;"></div><div class="a" style="left:361px;top:215px;width:1px;height:17px;background:#d4d4d4;"></div><div class="a" style="left:395px;top:215px;width:1px;height:17px;background:#d4d4d4;"></div><div class="a" style="left:485px;top:215px;width:1px;height:17px;background:#d4d4d4;"></div><div class="a" style="left:573px;top:215px;width:1px;height:17px;background:#d4d4d4;"></div><div class="a" style="left:650px;top:215px;width:1px;height:17px;background:#d4d4d4;"></div><div class="a" style="left:701px;top:215px;width:1px;height:17px;background:#d4d4d4;"></div><div class="a" style="left:163px;top:231px;width:539px;height:1px;background:#d8d8d8;"></div><div class="a" style="left:167px;top:217px;width:10px;height:10px;background:#fff;box-sizing:border-box;border:1px solid #a0a0a0;border-radius:1.5px;"></div><div class="t" style="top:212.67px;height:20px;line-height:20px;font-size:9.6px;color:#111;left:182.70px;transform:scaleX(0.850);transform-origin:0 0;">REC00002</div><div class="t" style="top:212.67px;height:20px;line-height:20px;font-size:9.6px;color:#111;left:243.50px;transform:scaleX(0.850);transform-origin:0 0;">BP</div><div class="t" style="top:212.67px;height:20px;line-height:20px;font-size:9.6px;color:#111;left:313.50px;transform:scaleX(0.920);transform-origin:0 0;">06/01/2016</div><div class="t" style="top:212.67px;height:20px;line-height:20px;font-size:9.6px;color:#111;left:364.50px;transform:scaleX(0.925);transform-origin:0 0;">0002</div><div class="t" style="top:212.67px;height:20px;line-height:20px;font-size:9.6px;color:#111;left:398.00px;transform:scaleX(0.815);transform-origin:0 0;">PRESTATION PAUL</div><div class="t" style="top:212.67px;height:20px;line-height:20px;font-size:9.6px;color:#111;left:488.50px;transform:scaleX(0.850);transform-origin:0 0;">CHQ</div><div class="t" style="top:212.67px;height:20px;line-height:20px;font-size:9.6px;color:#111;left:622.03px;transform:scaleX(0.850);transform-origin:0 0;">100,00</div><div class="t" style="top:212.67px;height:20px;line-height:20px;font-size:9.6px;color:#111;left:673.03px;transform:scaleX(0.850);transform-origin:0 0;">135,60</div><div class="a" style="left:162px;top:232px;width:1px;height:16px;background:#d4d4d4;"></div><div class="a" style="left:179px;top:232px;width:1px;height:16px;background:#d4d4d4;"></div><div class="a" style="left:241px;top:232px;width:1px;height:16px;background:#d4d4d4;"></div><div class="a" style="left:310px;top:232px;width:1px;height:16px;background:#d4d4d4;"></div><div class="a" style="left:361px;top:232px;width:1px;height:16px;background:#d4d4d4;"></div><div class="a" style="left:395px;top:232px;width:1px;height:16px;background:#d4d4d4;"></div><div class="a" style="left:485px;top:232px;width:1px;height:16px;background:#d4d4d4;"></div><div class="a" style="left:573px;top:232px;width:1px;height:16px;background:#d4d4d4;"></div><div class="a" style="left:650px;top:232px;width:1px;height:16px;background:#d4d4d4;"></div><div class="a" style="left:701px;top:232px;width:1px;height:16px;background:#d4d4d4;"></div><div class="a" style="left:163px;top:247px;width:539px;height:1px;background:#d8d8d8;"></div><div class="a" style="left:167px;top:234px;width:10px;height:10px;background:#fff;box-sizing:border-box;border:1px solid #a0a0a0;border-radius:1.5px;"></div><div class="t" style="top:229.67px;height:20px;line-height:20px;font-size:9.6px;color:#111;left:182.70px;transform:scaleX(0.850);transform-origin:0 0;">REC00005</div><div class="t" style="top:229.67px;height:20px;line-height:20px;font-size:9.6px;color:#111;left:243.50px;transform:scaleX(0.850);transform-origin:0 0;">CA</div><div class="t" style="top:229.67px;height:20px;line-height:20px;font-size:9.6px;color:#111;left:313.50px;transform:scaleX(0.920);transform-origin:0 0;">11/01/2016</div><div class="t" style="top:229.67px;height:20px;line-height:20px;font-size:9.6px;color:#111;left:364.50px;transform:scaleX(0.925);transform-origin:0 0;">0001</div><div class="t" style="top:229.67px;height:20px;line-height:20px;font-size:9.6px;color:#111;left:398.00px;transform:scaleX(0.815);transform-origin:0 0;">PRESTATION PETIT</div><div class="t" style="top:229.67px;height:20px;line-height:20px;font-size:9.6px;color:#111;left:488.50px;transform:scaleX(0.850);transform-origin:0 0;">ESP</div><div class="t" style="top:229.67px;height:20px;line-height:20px;font-size:9.6px;color:#111;left:622.03px;transform:scaleX(0.850);transform-origin:0 0;">100,00</div><div class="t" style="top:229.67px;height:20px;line-height:20px;font-size:9.6px;color:#111;left:677.56px;transform:scaleX(0.850);transform-origin:0 0;">55,70</div><div class="a" style="left:147px;top:248px;width:1353px;height:15px;background:#efefef;"></div><div class="a" style="left:147px;top:262px;width:1353px;height:1px;background:#e4e4e4;"></div><svg class="a" style="left:155px;top:252px" width="5" height="5" viewBox="0 0 5 5"><path d="M5 0 V5 H0Z" fill="#666"/></svg><div class="a" style="left:164px;top:250px;width:10px;height:10px;background:#fff;box-sizing:border-box;border:1px solid #a0a0a0;border-radius:1.5px;"></div><div class="t" style="top:244.60px;height:20px;line-height:20px;font-size:9.8px;color:#111;font-weight:bold;left:186.00px;transform:scaleX(0.953);transform-origin:0 0;">Mois: février 2016</div><div class="a" style="left:162px;top:263px;width:1px;height:16px;background:#d4d4d4;"></div><div class="a" style="left:179px;top:263px;width:1px;height:16px;background:#d4d4d4;"></div><div class="a" style="left:241px;top:263px;width:1px;height:16px;background:#d4d4d4;"></div><div class="a" style="left:310px;top:263px;width:1px;height:16px;background:#d4d4d4;"></div><div class="a" style="left:361px;top:263px;width:1px;height:16px;background:#d4d4d4;"></div><div class="a" style="left:395px;top:263px;width:1px;height:16px;background:#d4d4d4;"></div><div class="a" style="left:485px;top:263px;width:1px;height:16px;background:#d4d4d4;"></div><div class="a" style="left:573px;top:263px;width:1px;height:16px;background:#d4d4d4;"></div><div class="a" style="left:650px;top:263px;width:1px;height:16px;background:#d4d4d4;"></div><div class="a" style="left:701px;top:263px;width:1px;height:16px;background:#d4d4d4;"></div><div class="a" style="left:163px;top:278px;width:539px;height:1px;background:#d8d8d8;"></div><div class="a" style="left:167px;top:265px;width:10px;height:10px;background:#fff;box-sizing:border-box;border:1px solid #a0a0a0;border-radius:1.5px;"></div><div class="t" style="top:260.67px;height:20px;line-height:20px;font-size:9.6px;color:#111;left:182.70px;transform:scaleX(0.850);transform-origin:0 0;">REC00003</div><div class="t" style="top:260.67px;height:20px;line-height:20px;font-size:9.6px;color:#111;left:243.50px;transform:scaleX(0.850);transform-origin:0 0;">BP</div><div class="t" style="top:260.67px;height:20px;line-height:20px;font-size:9.6px;color:#111;left:313.50px;transform:scaleX(0.920);transform-origin:0 0;">01/02/2016</div><div class="t" style="top:260.67px;height:20px;line-height:20px;font-size:9.6px;color:#111;left:364.50px;transform:scaleX(0.925);transform-origin:0 0;">0003</div><div class="t" style="top:260.67px;height:20px;line-height:20px;font-size:9.6px;color:#111;left:398.00px;transform:scaleX(0.815);transform-origin:0 0;">PRESTATION PETIT</div><div class="t" style="top:260.67px;height:20px;line-height:20px;font-size:9.6px;color:#111;left:488.50px;transform:scaleX(0.850);transform-origin:0 0;">CB</div><div class="t" style="top:260.67px;height:20px;line-height:20px;font-size:9.6px;color:#111;left:622.03px;transform:scaleX(0.850);transform-origin:0 0;">100,00</div><div class="t" style="top:260.67px;height:20px;line-height:20px;font-size:9.6px;color:#111;left:673.03px;transform:scaleX(0.850);transform-origin:0 0;">120,30</div><div class="a" style="left:162px;top:279px;width:1px;height:17px;background:#d4d4d4;"></div><div class="a" style="left:179px;top:279px;width:1px;height:17px;background:#d4d4d4;"></div><div class="a" style="left:241px;top:279px;width:1px;height:17px;background:#d4d4d4;"></div><div class="a" style="left:310px;top:279px;width:1px;height:17px;background:#d4d4d4;"></div><div class="a" style="left:361px;top:279px;width:1px;height:17px;background:#d4d4d4;"></div><div class="a" style="left:395px;top:279px;width:1px;height:17px;background:#d4d4d4;"></div><div class="a" style="left:485px;top:279px;width:1px;height:17px;background:#d4d4d4;"></div><div class="a" style="left:573px;top:279px;width:1px;height:17px;background:#d4d4d4;"></div><div class="a" style="left:650px;top:279px;width:1px;height:17px;background:#d4d4d4;"></div><div class="a" style="left:701px;top:279px;width:1px;height:17px;background:#d4d4d4;"></div><div class="a" style="left:163px;top:295px;width:539px;height:1px;background:#d8d8d8;"></div><div class="a" style="left:167px;top:281px;width:10px;height:10px;background:#fff;box-sizing:border-box;border:1px solid #a0a0a0;border-radius:1.5px;"></div><div class="t" style="top:276.67px;height:20px;line-height:20px;font-size:9.6px;color:#111;left:182.70px;transform:scaleX(0.850);transform-origin:0 0;">REC00006</div><div class="t" style="top:276.67px;height:20px;line-height:20px;font-size:9.6px;color:#111;left:243.50px;transform:scaleX(0.850);transform-origin:0 0;">CA</div><div class="t" style="top:276.67px;height:20px;line-height:20px;font-size:9.6px;color:#111;left:313.50px;transform:scaleX(0.920);transform-origin:0 0;">03/02/2016</div><div class="t" style="top:276.67px;height:20px;line-height:20px;font-size:9.6px;color:#111;left:364.50px;transform:scaleX(0.925);transform-origin:0 0;">0002</div><div class="t" style="top:276.67px;height:20px;line-height:20px;font-size:9.6px;color:#111;left:398.00px;transform:scaleX(0.815);transform-origin:0 0;">PRESTATION DUPONT</div><div class="t" style="top:276.67px;height:20px;line-height:20px;font-size:9.6px;color:#111;left:488.50px;transform:scaleX(0.850);transform-origin:0 0;">ESP</div><div class="t" style="top:276.67px;height:20px;line-height:20px;font-size:9.6px;color:#111;left:622.03px;transform:scaleX(0.850);transform-origin:0 0;">100,00</div><div class="t" style="top:276.67px;height:20px;line-height:20px;font-size:9.6px;color:#111;left:677.56px;transform:scaleX(0.850);transform-origin:0 0;">65,40</div><div class="a" style="left:162px;top:296px;width:1px;height:16px;background:#d4d4d4;"></div><div class="a" style="left:179px;top:296px;width:1px;height:16px;background:#d4d4d4;"></div><div class="a" style="left:241px;top:296px;width:1px;height:16px;background:#d4d4d4;"></div><div class="a" style="left:310px;top:296px;width:1px;height:16px;background:#d4d4d4;"></div><div class="a" style="left:361px;top:296px;width:1px;height:16px;background:#d4d4d4;"></div><div class="a" style="left:395px;top:296px;width:1px;height:16px;background:#d4d4d4;"></div><div class="a" style="left:485px;top:296px;width:1px;height:16px;background:#d4d4d4;"></div><div class="a" style="left:573px;top:296px;width:1px;height:16px;background:#d4d4d4;"></div><div class="a" style="left:650px;top:296px;width:1px;height:16px;background:#d4d4d4;"></div><div class="a" style="left:701px;top:296px;width:1px;height:16px;background:#d4d4d4;"></div><div class="a" style="left:163px;top:311px;width:539px;height:1px;background:#d8d8d8;"></div><div class="a" style="left:167px;top:298px;width:10px;height:10px;background:#fff;box-sizing:border-box;border:1px solid #a0a0a0;border-radius:1.5px;"></div><div class="t" style="top:293.67px;height:20px;line-height:20px;font-size:9.6px;color:#111;left:182.70px;transform:scaleX(0.850);transform-origin:0 0;">REC00004</div><div class="t" style="top:293.67px;height:20px;line-height:20px;font-size:9.6px;color:#111;left:243.50px;transform:scaleX(0.850);transform-origin:0 0;">BP</div><div class="t" style="top:293.67px;height:20px;line-height:20px;font-size:9.6px;color:#111;left:313.50px;transform:scaleX(0.920);transform-origin:0 0;">06/02/2016</div><div class="t" style="top:293.67px;height:20px;line-height:20px;font-size:9.6px;color:#111;left:364.50px;transform:scaleX(0.925);transform-origin:0 0;">0004</div><div class="t" style="top:293.67px;height:20px;line-height:20px;font-size:9.6px;color:#111;left:398.00px;transform:scaleX(0.815);transform-origin:0 0;">PRESTATION DIVERS</div><div class="t" style="top:293.67px;height:20px;line-height:20px;font-size:9.6px;color:#111;left:488.50px;transform:scaleX(0.850);transform-origin:0 0;">CHQ</div><div class="t" style="top:293.67px;height:20px;line-height:20px;font-size:9.6px;color:#111;left:622.03px;transform:scaleX(0.850);transform-origin:0 0;">100,00</div><div class="t" style="top:293.67px;height:20px;line-height:20px;font-size:9.6px;color:#111;left:673.03px;transform:scaleX(0.850);transform-origin:0 0;">135,60</div><div class="a" style="left:154px;top:316px;width:514px;height:397px;background:#fff;"></div><div class="a" style="left:154px;top:316px;width:1px;height:397px;background:#acacac;"></div><div class="a" style="left:667px;top:316px;width:1px;height:397px;background:#acacac;"></div><div class="a" style="left:154px;top:712px;width:514px;height:1px;background:#acacac;"></div><div class="a" style="left:154px;top:316px;width:514px;height:27px;background:#b9b9b9;"></div><svg class="a" style="left:157px;top:322px" width="14" height="14" viewBox="0 0 14 14"><path d="M0.8 12.6 L1.8 9.2 L9.6 1.4 L12.2 4 L4.4 11.8Z" fill="#f5a623" stroke="#6a4a20" stroke-width="0.7"/><path d="M9.6 1.4 L10.6 0.4 L13.2 3 L12.2 4Z" fill="#e8252f" stroke="#a01010" stroke-width="0.4"/><path d="M0.8 12.6 L1.3 10.9 L2.6 12.1Z" fill="#333"/><path d="M7.3 8.6 H9.2 V6.7 H11.2 V8.6 H13.1 V10.6 H11.2 V12.6 H9.2 V10.6 H7.3Z" fill="#1f9a2a" stroke="#126a1a" stroke-width="0.5"/></svg><div class="t" style="top:319.32px;height:20px;line-height:20px;font-size:13.5px;color:#f6f6f6;left:173.30px;transform:scaleX(0.918);transform-origin:0 0;-webkit-text-stroke:0;">Recette REC00001 05/01/2016 0001</div><div class="a" style="left:617px;top:330px;width:6px;height:2px;background:#f4f4f4;"></div><div class="a" style="left:631px;top:326px;width:8px;height:6px;box-sizing:border-box;border:1px solid #f0f0f0;"></div><div class="a" style="left:631px;top:326px;width:8px;height:1.5px;background:#f0f0f0;"></div><svg class="a" style="left:646px;top:326px" width="8" height="7" viewBox="0 0 8 7"><path d="M0.8 0.5 L6.8 6.5 M6.8 0.5 L0.8 6.5" stroke="#f4f4f4" stroke-width="1.4"/></svg><div class="a" style="left:155px;top:360px;width:513px;height:1px;background:#ececec;"></div><div class="t" style="top:342.47px;height:20px;line-height:20px;font-size:10.2px;color:#222;left:163.40px;transform:scaleX(0.904);transform-origin:0 0;">Fichier</div><div class="t" style="top:342.47px;height:20px;line-height:20px;font-size:10.2px;color:#222;left:204.00px;transform:scaleX(0.930);transform-origin:0 0;">Édition</div><div class="t" style="top:342.47px;height:20px;line-height:20px;font-size:10.2px;color:#222;left:246.00px;transform:scaleX(0.879);transform-origin:0 0;">Vues</div><div class="t" style="top:342.47px;height:20px;line-height:20px;font-size:10.2px;color:#222;left:279.00px;transform:scaleX(0.940);transform-origin:0 0;">Actions</div><div class="t" style="top:342.47px;height:20px;line-height:20px;font-size:10.2px;color:#222;left:324.00px;transform:scaleX(0.857);transform-origin:0 0;">Fenêtres</div><div class="t" style="top:342.47px;height:20px;line-height:20px;font-size:10.2px;color:#222;left:372.00px;transform:scaleX(0.639);transform-origin:0 0;">?</div><div class="a" style="left:155px;top:385px;width:502px;height:1px;background:#e6e6e6;"></div><svg class="a" style="left:160px;top:367px" width="13" height="13" viewBox="0 0 13 13"><rect x="0.3" y="0.3" width="12.4" height="12.4" rx="1.5" fill="#b4b4b4"/><rect x="2.5" y="1" width="8" height="4.5" fill="#e4e4e4"/><path d="M3 2.5H10M3 4H10" stroke="#c8c8c8" stroke-width="0.6"/><rect x="3.5" y="8" width="6" height="4.7" fill="#c4c4c4"/><rect x="4.5" y="9" width="1.6" height="2.5" fill="#eee"/></svg><div class="t" style="top:362.60px;height:20px;line-height:20px;font-size:9.8px;color:#5c5c5c;left:176.00px;transform:scaleX(0.919);transform-origin:0 0;">Enregistrer</div><svg class="a" style="left:226px;top:367px" width="13" height="13" viewBox="0 0 13 13"><rect x="0.5" y="0.5" width="7" height="10" fill="#d4d4d4" stroke="#bbb" stroke-width="0.6"/><path d="M1.5 3H6M1.5 5H6M1.5 7H6" stroke="#bbb" stroke-width="0.6"/><rect x="5" y="5" width="8" height="8" rx="1" fill="#b0b0b0"/><rect x="6.5" y="6" width="5" height="2.5" fill="#e0e0e0"/><rect x="8" y="10.5" width="2" height="1.5" fill="#e8e8e8"/></svg><div class="t" style="top:362.60px;height:20px;line-height:20px;font-size:9.8px;color:#5c5c5c;left:242.00px;transform:scaleX(0.917);transform-origin:0 0;">Enregistrer et Fermer</div><svg class="a" style="left:333px;top:367px" width="13" height="13" viewBox="0 0 13 13"><path d="M0.5 0.5 H6.5 L9.5 3.5 V12.5 H0.5Z" fill="#dadada" stroke="#aaa" stroke-width="0.7"/><rect x="1.5" y="7" width="6" height="5.5" rx="0.8" fill="#a8a8a8"/><rect x="2.8" y="8" width="3.5" height="1.8" fill="#e0e0e0"/><path d="M9.5 9 L12 11.5 L9.5 12.5" stroke="#999" stroke-width="0.9" fill="none"/></svg><div class="t" style="top:362.60px;height:20px;line-height:20px;font-size:9.8px;color:#5c5c5c;left:349.00px;transform:scaleX(0.927);transform-origin:0 0;">Enregistrer et Nouveau</div><div class="a" style="left:448px;top:368px;width:1px;height:12px;background:#d8d8d8;"></div><svg class="a" style="left:454px;top:367px" width="13" height="13" viewBox="0 0 13 13"><path d="M3 5 V0.5 H8 L10 2.5 V5" fill="#fff" stroke="#3a86d8" stroke-width="0.9"/><rect x="0.5" y="4.5" width="12" height="5.5" rx="1.2" fill="#555" stroke="#333" stroke-width="0.6"/><rect x="1.5" y="5.2" width="10" height="1.3" fill="#888"/><path d="M2.8 8.5 H10.2 L10.8 12.5 H2.2Z" fill="#fff" stroke="#3a86d8" stroke-width="0.9"/><path d="M4 10.5 H9" stroke="#bbb" stroke-width="0.8"/></svg><svg class="a" style="left:473px;top:367px" width="13" height="13" viewBox="0 0 13 13"><path d="M0.5 0.5 H6.5 L9.5 3.5 V12.5 H0.5Z" fill="#fff" stroke="#777" stroke-width="0.9"/><circle cx="7" cy="8" r="2.5" fill="#cfe6fa" stroke="#2a6ab0" stroke-width="1.2"/><path d="M8.8 9.8 L11.8 12.5" stroke="#222" stroke-width="1.6"/></svg><div class="a" style="left:491px;top:368px;width:1px;height:12px;background:#d8d8d8;"></div><svg class="a" style="left:497px;top:367px" width="13" height="12" viewBox="0 0 13 12"><path d="M0.5 6 L6 1 V4 Q12 4 12.5 11 Q10 7.5 6 8 V11Z" fill="#b4b4b4"/></svg><svg class="a" style="left:516px;top:367px" width="13" height="12" viewBox="0 0 13 12"><path d="M12.5 6 L7 1 V4 Q1 4 0.5 11 Q3 7.5 7 8 V11Z" fill="#b4b4b4"/></svg><div class="a" style="left:534px;top:368px;width:1px;height:12px;background:#d8d8d8;"></div><svg class="a" style="left:540px;top:367px" width="14" height="14" viewBox="0 0 14 14"><path d="M0.5 0.5 H5 L6.5 2 V9.5 H0.5Z" fill="#f6f6f6" stroke="#b4b4b4"/><path d="M2 3H5M2 5H5M2 7H5" stroke="#ccc"/><path d="M5.5 3.5 H10.5 L12.5 5.5 V12.5 H5.5Z" fill="#f6f6f6" stroke="#8a8a8a"/><path d="M7 7H11M7 9H11M7 11H11" stroke="#bbb"/></svg><div class="a" style="left:558px;top:368px;width:1px;height:12px;background:#d8d8d8;"></div><svg class="a" style="left:564px;top:367px" width="13" height="13" viewBox="0 0 13 13"><path d="M2 2 L11 11 M11 2 L2 11" stroke="#6a1010" stroke-width="4" stroke-linecap="round"/><path d="M2 2 L11 11 M11 2 L2 11" stroke="#e0161e" stroke-width="3" stroke-linecap="round"/></svg><div class="a" style="left:582px;top:368px;width:1px;height:12px;background:#d8d8d8;"></div><svg class="a" style="left:588px;top:367px" width="13" height="13" viewBox="0 0 13 13"><circle cx="6.5" cy="6.5" r="6" fill="#2f6fb8"/><circle cx="6.5" cy="6.5" r="4.6" fill="#5a9ad8"/><path d="M3 6.5 L6.5 3.3 V5.2 H10 V7.8 H6.5 V9.7Z" fill="#fff"/></svg><svg class="a" style="left:607px;top:367px" width="13" height="13" viewBox="0 0 13 13"><circle cx="6.5" cy="6.5" r="6" fill="#2f6fb8"/><circle cx="6.5" cy="6.5" r="4.6" fill="#5a9ad8"/><path d="M10 6.5 L6.5 3.3 V5.2 H3 V7.8 H6.5 V9.7Z" fill="#fff"/></svg><svg class="a" style="left:658px;top:371px" width="7" height="5" viewBox="0 0 7 5"><path d="M0.5 0.5 L3.5 3.8 L6.5 0.5" stroke="#555" stroke-width="1.2" fill="none"/></svg><svg class="a" style="left:160px;top:391px" width="13" height="13" viewBox="0 0 13 13"><path d="M3.5 1.5 H11 V11 Q11 12.5 9.5 12.5 H2 Q0.5 12.5 0.5 11 Q0.5 9.8 1.8 9.8 H3.5Z" fill="#fff" stroke="#555" stroke-width="0.9"/><path d="M3.3 0.3 H11.7 Q12.7 0.3 12.7 1.5 Q12.7 2.7 11.7 2.7 H3.3Z" fill="#333"/><circle cx="1.8" cy="11" r="1.3" fill="#333"/></svg><div class="t" style="top:387.60px;height:20px;line-height:20px;font-size:9.8px;color:#1e1e1e;left:176.00px;transform:scaleX(0.964);transform-origin:0 0;">Voir écriture</div><div class="a" style="left:155px;top:409px;width:76px;height:1px;background:#dcdcdc;"></div><div class="a" style="left:230px;top:406px;width:1px;height:4px;background:#dcdcdc;"></div><div class="t" style="top:408.67px;height:20px;line-height:20px;font-size:9.6px;color:#1e1e1e;left:214.20px;transform:scaleX(0.901);transform-origin:0 0;">Date</div><div class="a" style="left:237px;top:426px;width:160px;height:1px;background:#c8c8c8;"></div><div class="a" style="left:396px;top:411px;width:1px;height:16px;background:#c8c8c8;"></div><div class="a" style="left:237px;top:424px;width:1px;height:3px;background:#c8c8c8;"></div><div class="t" style="top:408.67px;height:20px;line-height:20px;font-size:9.6px;color:#4a4a4a;left:239.70px;transform:scaleX(0.911);transform-origin:0 0;">05/01/2016</div><div class="t" style="top:427.67px;height:20px;line-height:20px;font-size:9.6px;color:#1e1e1e;left:189.20px;transform:scaleX(0.870);transform-origin:0 0;">N° de pièce</div><div class="a" style="left:237px;top:445px;width:160px;height:1px;background:#c8c8c8;"></div><div class="a" style="left:396px;top:430px;width:1px;height:16px;background:#c8c8c8;"></div><div class="a" style="left:237px;top:443px;width:1px;height:3px;background:#c8c8c8;"></div><div class="t" style="top:427.67px;height:20px;line-height:20px;font-size:9.6px;color:#4a4a4a;left:239.70px;transform:scaleX(0.879);transform-origin:0 0;">0001</div><div class="t" style="top:446.67px;height:20px;line-height:20px;font-size:9.6px;color:#1e1e1e;left:190.80px;transform:scaleX(0.868);transform-origin:0 0;">Description</div><div class="a" style="left:237px;top:464px;width:160px;height:1px;background:#c8c8c8;"></div><div class="a" style="left:396px;top:449px;width:1px;height:16px;background:#c8c8c8;"></div><div class="a" style="left:237px;top:462px;width:1px;height:3px;background:#c8c8c8;"></div><div class="t" style="top:446.67px;height:20px;line-height:20px;font-size:9.6px;color:#4a4a4a;left:239.70px;transform:scaleX(0.808);transform-origin:0 0;">PRESTATION DUPONT</div><div class="t" style="top:465.67px;height:20px;line-height:20px;font-size:9.6px;color:#1e1e1e;left:172.50px;transform:scaleX(0.851);transform-origin:0 0;">Banque / Caisse</div><div class="a" style="left:237px;top:482px;width:160px;height:1px;background:#c8c8c8;"></div><div class="a" style="left:396px;top:468px;width:1px;height:15px;background:#c8c8c8;"></div><div class="a" style="left:237px;top:480px;width:1px;height:3px;background:#c8c8c8;"></div><div class="t" style="top:465.67px;height:20px;line-height:20px;font-size:9.6px;color:#4a4a4a;left:239.70px;transform:scaleX(0.768);transform-origin:0 0;">BP</div><svg class="a" style="left:389px;top:417px" width="5" height="3" viewBox="0 0 5 3"><path d="M0 0H5L2.5 3Z" fill="#555"/></svg><svg class="a" style="left:378px;top:474px" width="5" height="3" viewBox="0 0 5 3"><path d="M0 0H5L2.5 3Z" fill="#555"/></svg><svg class="a" style="left:387px;top:470px" width="9" height="10" viewBox="0 0 9 10"><path d="M1 8 L2 6 L6.5 1.5 L8 3 L3.5 7.5Z" fill="#f0a030"/><path d="M6.5 1.5 L7.3 0.7 L8.8 2.2 L8 3Z" fill="#e03030"/><rect x="0" y="9" width="8" height="1" fill="#3a8ad0"/></svg><div class="t" style="top:408.67px;height:20px;line-height:20px;font-size:9.6px;color:#1e1e1e;left:415.40px;transform:scaleX(0.902);transform-origin:0 0;">% Professionnel</div><div class="a" style="left:482px;top:426px;width:181px;height:1px;background:#c8c8c8;"></div><div class="a" style="left:662px;top:411px;width:1px;height:16px;background:#c8c8c8;"></div><div class="a" style="left:482px;top:424px;width:1px;height:3px;background:#c8c8c8;"></div><div class="t" style="top:427.67px;height:20px;line-height:20px;font-size:9.6px;color:#1e1e1e;left:417.20px;transform:scaleX(0.882);transform-origin:0 0;">N° de document</div><div class="a" style="left:482px;top:445px;width:181px;height:1px;background:#c8c8c8;"></div><div class="a" style="left:662px;top:430px;width:1px;height:16px;background:#c8c8c8;"></div><div class="a" style="left:482px;top:443px;width:1px;height:3px;background:#c8c8c8;"></div><div class="t" style="top:446.67px;height:20px;line-height:20px;font-size:9.6px;color:#1e1e1e;left:404.40px;transform:scaleX(0.872);transform-origin:0 0;">Moyen de paiement</div><div class="a" style="left:482px;top:464px;width:181px;height:1px;background:#c8c8c8;"></div><div class="a" style="left:662px;top:449px;width:1px;height:16px;background:#c8c8c8;"></div><div class="a" style="left:482px;top:462px;width:1px;height:3px;background:#c8c8c8;"></div><div class="t" style="top:465.67px;height:20px;line-height:20px;font-size:9.6px;color:#1e1e1e;left:429.80px;transform:scaleX(0.863);transform-origin:0 0;">Montant TTC</div><div class="a" style="left:482px;top:468px;width:181px;height:15px;background:#e4e4e4;"></div><div class="t" style="top:408.67px;height:20px;line-height:20px;font-size:9.6px;color:#4a4a4a;left:623.03px;transform:scaleX(0.850);transform-origin:0 0;">100,00</div><svg class="a" style="left:653px;top:414px" width="7" height="9" viewBox="0 0 7 9"><rect x="0.5" y="0.5" width="6" height="8" fill="#9ab8dc" stroke="#5a7aa8"/><rect x="1.5" y="2" width="4" height="1.2" fill="#d04040"/></svg><div class="t" style="top:427.67px;height:20px;line-height:20px;font-size:9.6px;color:#4a4a4a;left:484.90px;transform:scaleX(0.920);transform-origin:0 0;">754</div><div class="t" style="top:446.67px;height:20px;line-height:20px;font-size:9.6px;color:#4a4a4a;left:484.90px;transform:scaleX(0.864);transform-origin:0 0;">Chèque</div><svg class="a" style="left:643px;top:455px" width="5" height="3" viewBox="0 0 5 3"><path d="M0 0H5L2.5 3Z" fill="#555"/></svg><svg class="a" style="left:652px;top:451px" width="9" height="10" viewBox="0 0 9 10"><path d="M1 8 L2 6 L6.5 1.5 L8 3 L3.5 7.5Z" fill="#f0a030"/><path d="M6.5 1.5 L7.3 0.7 L8.8 2.2 L8 3Z" fill="#e03030"/><rect x="0" y="9" width="8" height="1" fill="#3a8ad0"/></svg><div class="t" style="top:465.67px;height:20px;line-height:20px;font-size:9.6px;color:#888;left:623.03px;transform:scaleX(0.850);transform-origin:0 0;">120,30</div><svg class="a" style="left:653px;top:470px" width="7" height="9" viewBox="0 0 7 9"><rect x="0.5" y="0.5" width="6" height="8" fill="#ccc" stroke="#aaa"/><rect x="1.5" y="2" width="4" height="1.2" fill="#aaa"/></svg><div class="a" style="left:160px;top:509px;width:393px;height:1px;background:#e4e4e4;"></div><svg class="a" style="left:164px;top:492px" width="13" height="13" viewBox="0 0 13 13"><path d="M6.3 1.5 V11 M1.5 6.3 H11.2" stroke="#1f8a26" stroke-width="4.2" stroke-linecap="round"/><path d="M6.3 2 V10.5 M2 6.3 H10.7" stroke="#2aa332" stroke-width="2.8"/></svg><div class="t" style="top:487.60px;height:20px;line-height:20px;font-size:9.8px;color:#1e1e1e;left:179.70px;transform:scaleX(0.988);transform-origin:0 0;">Ajouter</div><svg class="a" style="left:216px;top:492px" width="13" height="13" viewBox="0 0 13 13"><path d="M1 4 H5.5 V1 L12 6.5 L5.5 12 V9 H1Z" fill="#2aa332" stroke="#1a7a22" stroke-width="0.8" stroke-linejoin="round"/></svg><div class="t" style="top:487.60px;height:20px;line-height:20px;font-size:9.8px;color:#1e1e1e;left:232.00px;transform:scaleX(0.914);transform-origin:0 0;">Insérer</div><svg class="a" style="left:265.5px;top:492px" width="13" height="13" viewBox="0 0 13 13"><path d="M2 2 L11 11 M11 2 L2 11" stroke="#6a1010" stroke-width="4" stroke-linecap="round"/><path d="M2 2 L11 11 M11 2 L2 11" stroke="#e0161e" stroke-width="3" stroke-linecap="round"/></svg><div class="t" style="top:487.60px;height:20px;line-height:20px;font-size:9.8px;color:#1e1e1e;left:281.40px;transform:scaleX(0.951);transform-origin:0 0;">Supprimer</div><div class="a" style="left:330px;top:492px;width:1px;height:13px;background:#d4d4d4;"></div><div class="t" style="top:487.60px;height:20px;line-height:20px;font-size:9.8px;color:#1e1e1e;left:335.40px;transform:scaleX(0.896);transform-origin:0 0;">Vues</div><div class="a" style="left:359px;top:505px;width:109px;height:1px;background:#c8c8c8;"></div><div class="a" style="left:467px;top:489px;width:1px;height:17px;background:#d0d0d0;"></div><div class="a" style="left:359px;top:502px;width:1px;height:4px;background:#d0d0d0;"></div><svg class="a" style="left:361px;top:492px" width="14" height="13" viewBox="0 0 14 13"><rect x="0.5" y="0.5" width="10.5" height="11" fill="#fafafa" stroke="#888" stroke-width="0.9"/><rect x="0.5" y="0.5" width="10.5" height="2" fill="#777"/><path d="M0.5 5H11M0.5 8H11M4 2.5V11.5M7.5 2.5V11.5" stroke="#aaa" stroke-width="0.8"/><path d="M6.5 11 L7.2 9.2 L11 5.6 L12.8 7.4 L9 11Z" fill="#2a7ad0"/><path d="M6.2 12.5 L7 11" stroke="#444" stroke-width="0.8"/></svg><div class="t" style="top:488.81px;height:20px;line-height:20px;font-size:9.2px;color:#333;left:377.70px;transform:scaleX(0.953);transform-origin:0 0;">Vue par défaut</div><svg class="a" style="left:460px;top:497px" width="5" height="3" viewBox="0 0 5 3"><path d="M0 0H5L2.5 3Z" fill="#555"/></svg><svg class="a" style="left:474px;top:492px" width="14" height="13" viewBox="0 0 14 13"><rect x="0.5" y="0.5" width="10.5" height="11" fill="#fafafa" stroke="#888" stroke-width="0.9"/><rect x="0.5" y="0.5" width="10.5" height="2" fill="#777"/><path d="M0.5 5H11M0.5 8H11M4 2.5V11.5M7.5 2.5V11.5" stroke="#aaa" stroke-width="0.8"/><circle cx="10.5" cy="10" r="2.3" fill="#fff" stroke="#2a78d0" stroke-width="1.9"/></svg><div class="a" style="left:492px;top:492px;width:1px;height:13px;background:#d4d4d4;"></div><svg class="a" style="left:498px;top:492px" width="13" height="13" viewBox="0 0 13 13"><circle cx="5" cy="5" r="3.7" fill="#bfe4fc" stroke="#6a6a6a" stroke-width="1.7"/><path d="M7.6 7.6 L11.6 11.6" stroke="#333" stroke-width="2.4" stroke-linecap="round"/></svg><svg class="a" style="left:516.5px;top:492px" width="13" height="13" viewBox="0 0 13 13"><circle cx="5" cy="5" r="3.7" fill="#dadada" stroke="#b0b0b0" stroke-width="1.7"/><path d="M7.6 7.6 L11.6 11.6" stroke="#b4b4b4" stroke-width="2.4" stroke-linecap="round"/><path d="M2.5 9 L1.5 12 M6.5 9.5 L7 12" stroke="#bbb" stroke-width="1.2"/></svg><svg class="a" style="left:535px;top:492px" width="13" height="13" viewBox="0 0 13 13"><circle cx="5" cy="5" r="3.7" fill="#dadada" stroke="#b0b0b0" stroke-width="1.7"/><path d="M7.6 7.6 L11.6 11.6" stroke="#b4b4b4" stroke-width="2.4" stroke-linecap="round"/><path d="M2.5 9 L1.5 12 M6.5 9.5 L7 12" stroke="#bbb" stroke-width="1.2"/></svg><div class="a" style="left:159px;top:510px;width:504px;height:200px;background:#fff;box-sizing:border-box;border:1px solid #cacaca;"></div><div class="a" style="left:160px;top:511px;width:502px;height:15px;background:#f4f4f4;"></div><div class="a" style="left:160px;top:526px;width:502px;height:1px;background:#d0d0d0;"></div><div class="a" style="left:173px;top:511px;width:1px;height:15px;background:#d4d4d4;"></div><div class="a" style="left:326px;top:511px;width:1px;height:15px;background:#d4d4d4;"></div><div class="a" style="left:388px;top:511px;width:1px;height:15px;background:#d4d4d4;"></div><div class="a" style="left:557px;top:511px;width:1px;height:15px;background:#d4d4d4;"></div><div class="a" style="left:642px;top:511px;width:1px;height:15px;background:#d4d4d4;"></div><div class="t" style="top:508.67px;height:20px;line-height:20px;font-size:9.6px;color:#1e1e1e;left:175.60px;transform:scaleX(0.904);transform-origin:0 0;">Type et taux de TVA</div><div class="t" style="top:508.67px;height:20px;line-height:20px;font-size:9.6px;color:#1e1e1e;left:328.50px;transform:scaleX(0.884);transform-origin:0 0;">Montant TVA</div><div class="t" style="top:508.67px;height:20px;line-height:20px;font-size:9.6px;color:#1e1e1e;left:391.20px;transform:scaleX(0.974);transform-origin:0 0;">Recette</div><div class="t" style="top:508.67px;height:20px;line-height:20px;font-size:9.6px;color:#1e1e1e;left:559.60px;transform:scaleX(0.876);transform-origin:0 0;">Montant TTC</div><div class="a" style="left:173px;top:527px;width:215px;height:17px;background:#e2e2e2;"></div><div class="a" style="left:388px;top:527px;width:169px;height:17px;background:#f4f4f4;"></div><div class="a" style="left:557px;top:527px;width:85px;height:17px;background:#b6b6b6;"></div><div class="a" style="left:173px;top:544px;width:469px;height:1px;background:#b8b8b8;"></div><div class="a" style="left:326px;top:527px;width:1px;height:17px;background:#cfcfcf;"></div><div class="a" style="left:388px;top:527px;width:1px;height:17px;background:#cfcfcf;"></div><div class="a" style="left:557px;top:527px;width:1px;height:17px;background:#c8c8c8;"></div><div class="a" style="left:642px;top:511px;width:1px;height:34px;background:#cfcfcf;"></div><div class="a" style="left:173px;top:527px;width:1px;height:18px;background:#c0c0c0;"></div><svg class="a" style="left:165px;top:532px" width="4" height="7" viewBox="0 0 4 7"><path d="M0 0 L3.5 3.5 L0 7Z" fill="#444"/></svg><div class="t" style="top:525.67px;height:20px;line-height:20px;font-size:9.6px;color:#1e1e1e;left:391.20px;transform:scaleX(0.883);transform-origin:0 0;">Prestations de services</div><div class="t" style="top:525.67px;height:20px;line-height:20px;font-size:9.6px;color:#1e1e1e;left:614.93px;transform:scaleX(0.850);transform-origin:0 0;">120,30</div><div class="a" style="left:160px;top:686px;width:502px;height:23px;background:#f4f4f4;"></div><div class="a" style="left:160px;top:685px;width:502px;height:1px;background:#c8c8c8;"></div><div class="a" style="left:327px;top:688px;width:62px;height:19px;background:#fff;box-sizing:border-box;border:1px solid #d0d0d0;"></div><div class="t" style="top:687.67px;height:20px;line-height:20px;font-size:9.6px;color:#1e1e1e;left:367.13px;transform:scaleX(0.850);transform-origin:0 0;">0,00</div><div class="a" style="left:559px;top:688px;width:84px;height:19px;background:#fff;box-sizing:border-box;border:1px solid #d0d0d0;"></div><div class="t" style="top:687.67px;height:20px;line-height:20px;font-size:9.6px;color:#1e1e1e;left:611.83px;transform:scaleX(0.850);transform-origin:0 0;">120,30</div><div class="a" style="left:147px;top:311px;width:16px;height:1px;background:#d8d8d8;"></div>
</body></html>
